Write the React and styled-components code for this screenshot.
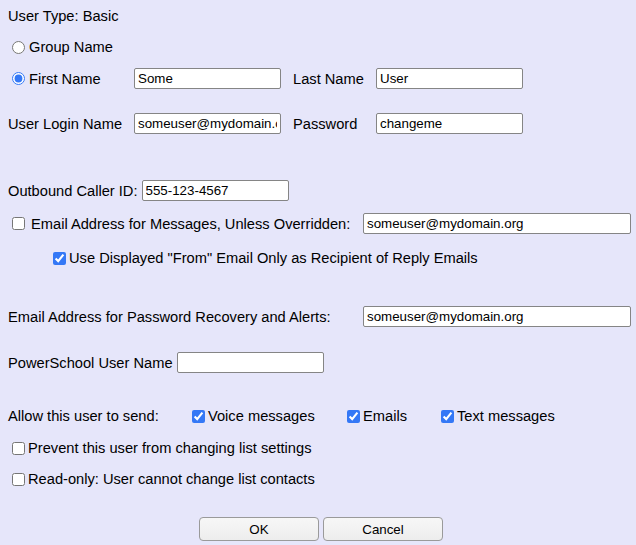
import React from "react";
import styled, { createGlobalStyle } from "styled-components";

const Global = createGlobalStyle`
  html, body { margin: 0; padding: 0; background: #e6e6fa; }
  body { font-family: "Liberation Sans", Arial, sans-serif; color: #000; }
  #root { min-height: 545px; background: #e6e6fa; }
`;

const Page = styled.form`
  display: flex;
  flex-direction: column;
  padding: 3px 2px 0 8px;
  font-size: 11pt;
  accent-color: #3478f6;
`;

const Row = styled.div`
  display: flex;
  align-items: center;
  height: 26px;
  margin-top: ${(p) => p.$mt || 0}px;
  padding-left: ${(p) => p.$indent || 0}px;
  gap: ${(p) => p.$gap || 0}px;
`;

const Cell = styled.label`
  display: flex;
  align-items: center;
  width: ${(p) => p.$w}px;
  flex: none;
  padding-left: ${(p) => p.$pl || 0}px;
  box-sizing: border-box;
  white-space: nowrap;
`;

const Text = styled.span`
  white-space: nowrap;
`;

const TextInput = styled.input`
  box-sizing: border-box;
  width: ${(p) => p.$w || 147}px;
  height: 21px;
  margin: 0;
  padding: 0 3px;
  border: 1px solid #858585;
  border-radius: 2px;
  background: #fff;
  font-family: "Liberation Sans", Arial, sans-serif;
  font-size: 13.333px;
  color: #000;
  outline: none;
`;

const Radio = styled.input.attrs({ type: "radio" })`
  width: 13px;
  height: 13px;
  margin: 0 4px 0 4px;
  flex: none;
`;

const Check = styled.input.attrs({ type: "checkbox" })`
  width: 13px;
  height: 13px;
  margin: 0 ${(p) => (p.$mr != null ? p.$mr : 3)}px 0 ${(p) => p.$ml || 0}px;
  flex: none;
`;

const ButtonBar = styled.div`
  display: flex;
  justify-content: center;
  align-items: center;
  gap: 4px;
  height: 26px;
  margin-top: 24px;
`;

const Button = styled.button`
  box-sizing: border-box;
  width: 120px;
  height: 24px;
  margin: 0;
  padding: 0;
  border: 1px solid #9a9a9a;
  border-radius: 4px;
  background: linear-gradient(#f7f7f7, #ededed);
  font-family: "Liberation Sans", Arial, sans-serif;
  font-size: 13.333px;
  color: #000;
`;

export default function App() {
  return (
    <>
      <Global />
      <Page onSubmit={(e) => e.preventDefault()}>
        <Row>
          <Text>User Type: Basic</Text>
        </Row>

        <Row $mt={5}>
          <Cell $w={200}>
            <Radio name="nameType" />
            <Text>Group Name</Text>
          </Cell>
        </Row>

        <Row $mt={5.5}>
          <Cell $w={126}>
            <Radio name="nameType" defaultChecked />
            <Text>First Name</Text>
          </Cell>
          <TextInput defaultValue="Some" />
          <Cell $w={95} $pl={12}>
            <Text>Last Name</Text>
          </Cell>
          <TextInput defaultValue="User" />
        </Row>

        <Row $mt={19}>
          <Cell $w={126}>
            <Text>User Login Name</Text>
          </Cell>
          <TextInput defaultValue="someuser@mydomain.org" />
          <Cell $w={95} $pl={12}>
            <Text>Password</Text>
          </Cell>
          <TextInput defaultValue="changeme" />
        </Row>

        <Row $mt={41} $gap={4}>
          <Text>Outbound Caller ID:</Text>
          <TextInput defaultValue="555-123-4567" />
        </Row>

        <Row $mt={7}>
          <Cell $w={355}>
            <Check $ml={4} $mr={6} />
            <Text>Email Address for Messages, Unless Overridden:</Text>
          </Cell>
          <TextInput $w={268} defaultValue="someuser@mydomain.org" />
        </Row>

        <Row $mt={8.5} $indent={45}>
          <Cell $w={500}>
            <Check defaultChecked />
            <Text>Use Displayed "From" Email Only as Recipient of Reply Emails</Text>
          </Cell>
        </Row>

        <Row $mt={32.5}>
          <Cell $w={355}>
            <Text>Email Address for Password Recovery and Alerts:</Text>
          </Cell>
          <TextInput $w={268} defaultValue="someuser@mydomain.org" />
        </Row>

        <Row $mt={20} $gap={4}>
          <Text>PowerSchool User Name</Text>
          <TextInput defaultValue="" />
        </Row>

        <Row $mt={27.5}>
          <Cell $w={184}>
            <Text>Allow this user to send:</Text>
          </Cell>
          <Cell $w={155}>
            <Check defaultChecked />
            <Text>Voice messages</Text>
          </Cell>
          <Cell $w={94}>
            <Check defaultChecked />
            <Text>Emails</Text>
          </Cell>
          <Cell $w={150}>
            <Check defaultChecked />
            <Text>Text messages</Text>
          </Cell>
        </Row>

        <Row $mt={6}>
          <Cell $w={400}>
            <Check $ml={4} />
            <Text>Prevent this user from changing list settings</Text>
          </Cell>
        </Row>

        <Row $mt={5}>
          <Cell $w={400}>
            <Check $ml={4} />
            <Text>Read-only: User cannot change list contacts</Text>
          </Cell>
        </Row>

        <ButtonBar>
          <Button type="submit">OK</Button>
          <Button type="button">Cancel</Button>
        </ButtonBar>
      </Page>
    </>
  );
}
